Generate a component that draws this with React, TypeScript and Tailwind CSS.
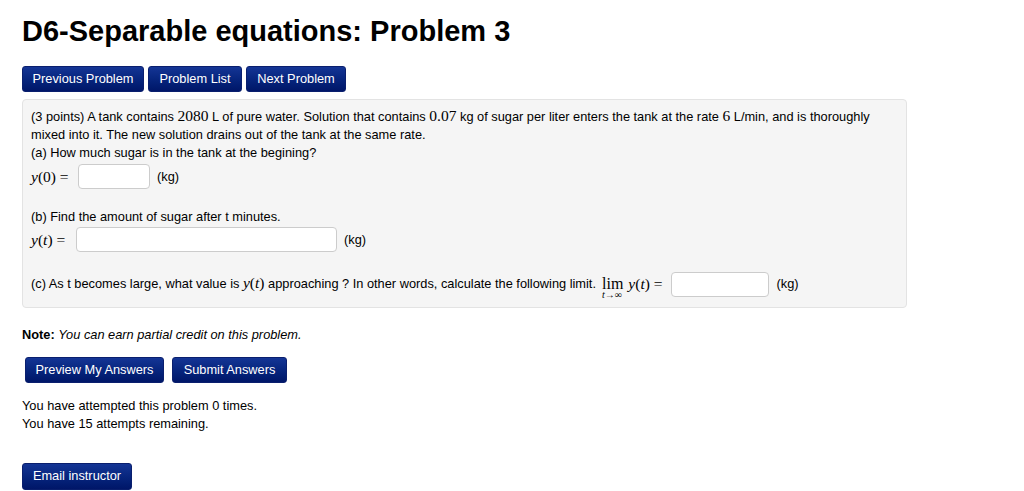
import React from "react";

const sans = { fontFamily: '"Liberation Sans", Arial, sans-serif' };

function NavButton({ children, className = "" }: { children: React.ReactNode; className?: string }) {
  return (
    <button
      className={
        "h-[26px] px-[8px] whitespace-nowrap rounded-[3px] border border-[#0a1f6e] bg-gradient-to-b from-[#143595] to-[#001668] text-white text-[12.8px] leading-none " +
        className
      }
    >
      {children}
    </button>
  );
}

function M({ children }: { children: React.ReactNode }) {
  return <span className="font-['Liberation_Serif'] text-[15.5px] leading-none">{children}</span>;
}

function MI({ children }: { children: React.ReactNode }) {
  return <span className="font-['Liberation_Serif'] italic text-[15.5px] leading-none">{children}</span>;
}

function Answer({ w }: { w: string }) {
  return <input className={"h-[25px] bg-white border border-[#cccccc] rounded-[4px] " + w} />;
}

export default function App() {
  return (
    <div className="min-h-screen bg-white text-black pl-[22px]" style={sans}>
      <h1 className="pt-[14px] text-[29px] font-bold leading-[35px]">D6-Separable equations: Problem 3</h1>

      <div className="mt-[17px] flex gap-[4px]">
        <NavButton className="w-[122px]">Previous Problem</NavButton>
        <NavButton className="w-[94px]">Problem List</NavButton>
        <NavButton className="w-[100px]">Next Problem</NavButton>
      </div>

      <div className="mt-[7px] w-[885px] h-[209px] bg-[#f5f5f5] border border-[#e3e3e3] rounded-[4px] pl-[8px] pt-[8px] text-[12.8px] leading-[18px]">
        <div>
          (3 points) A tank contains <M>2080</M> L of pure water. Solution that contains <M>0.07</M> kg of sugar per liter
          enters the tank at the rate <M>6</M> L/min, and is thoroughly mixed into it. The new solution drains out of the
          tank at the same rate.
        </div>
        <div>(a) How much sugar is in the tank at the begining?</div>
        <div className="flex items-center h-[25px] mt-[2px]">
          <span className="w-[47px] font-['Liberation_Serif'] text-[15.5px]">
            <i>y</i>(0) =
          </span>
          <Answer w="w-[72px]" />
          <span className="ml-[7px]">(kg)</span>
        </div>

        <div className="mt-[19px]">(b) Find the amount of sugar after t minutes.</div>
        <div className="flex items-center h-[25px] mt-[1px]">
          <span className="w-[45px] font-['Liberation_Serif'] text-[15.5px]">
            <i>y</i>(<i>t</i>) =
          </span>
          <Answer w="w-[261px]" />
          <span className="ml-[7px]">(kg)</span>
        </div>

        <div className="flex items-center h-[26px] mt-[19px]">
          <span>
            (c) As t becomes large, what value is <MI>y</MI>
            <M>(</M>
            <MI>t</MI>
            <M>)</M> approaching ? In other words, calculate the following limit.
          </span>
          <span className="relative ml-[6px] font-['Liberation_Serif'] text-[16px] leading-none">
            lim
            <span className="absolute left-[0px] top-[14px] text-[10px] leading-none italic whitespace-nowrap">
              t<span className="not-italic">→∞</span>
            </span>
          </span>
          <span className="ml-[5px] mr-[9px] font-['Liberation_Serif'] text-[15.5px]">
            <i>y</i>(<i>t</i>) =
          </span>
          <Answer w="w-[98px]" />
          <span className="ml-[7px]">(kg)</span>
        </div>
      </div>

      <div className="mt-[18px] text-[12.8px] leading-[18px]">
        <b>Note:</b> <i>You can earn partial credit on this problem.</i>
      </div>

      <div className="mt-[13px] ml-[3px] flex gap-[8px]">
        <NavButton className="w-[139px]">Preview My Answers</NavButton>
        <NavButton className="w-[115px]">Submit Answers</NavButton>
      </div>

      <div className="mt-[14px] text-[12.8px] leading-[18px]">
        <div>You have attempted this problem 0 times.</div>
        <div>You have 15 attempts remaining.</div>
      </div>

      <div className="mt-[30px]">
        <NavButton className="w-[110px] h-[27px]">Email instructor</NavButton>
      </div>
    </div>
  );
}
